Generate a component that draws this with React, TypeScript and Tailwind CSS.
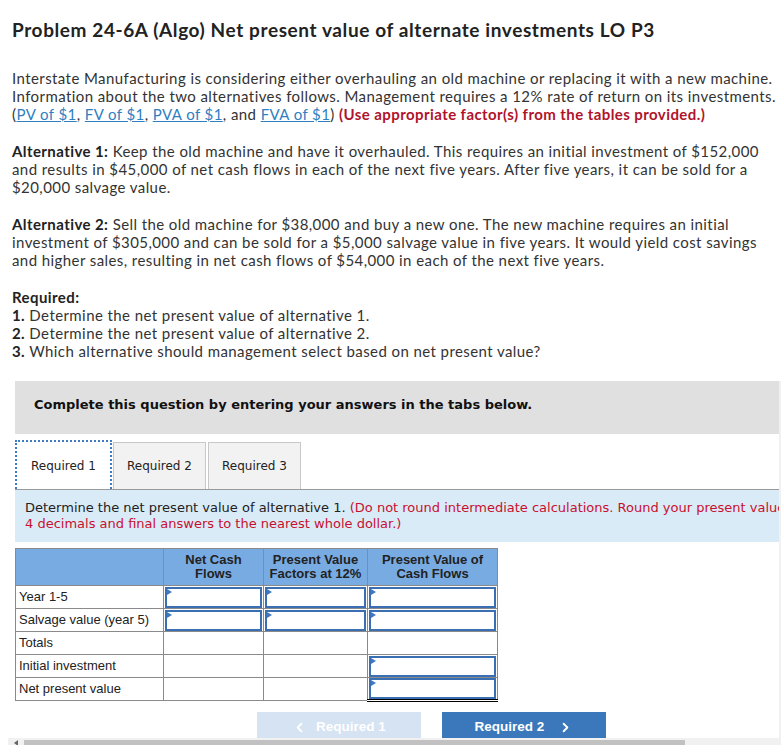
import React from "react";
import { ChevronLeft, ChevronRight } from "lucide-react";

const Tri = () => (
  <span className="absolute left-0 top-0 w-0 h-0 border-t-[3px] border-b-[3px] border-l-[5px] border-t-transparent border-b-transparent border-l-[#3d79c2]" />
);

const InputCell = ({ npv = false }: { npv?: boolean }) => (
  <td
    className={`border border-[#8a8a8a] p-0 h-[23px] ${
      npv ? "border-t-black border-b-[3px] border-b-black [border-bottom-style:double]" : ""
    }`}
  >
    <div className="relative h-[21px] mx-[1px] border-2 border-[#3a6fb3] bg-white">
      <Tri />
    </div>
  </td>
);

const EmptyCell = () => <td className="border border-[#8a8a8a] p-0 h-[23px]" />;

const Label = ({ children }: { children: React.ReactNode }) => (
  <td className="border border-[#8a8a8a] px-[3px] h-[23px] text-[13px] text-[#222] whitespace-nowrap">{children}</td>
);

export default function App() {
  const body = "font-['Lato','Liberation_Sans',sans-serif]";
  const verdana = "font-['DejaVu_Sans','Verdana',sans-serif]";
  const arial = "font-['Liberation_Sans','Arial',sans-serif]";
  const link = "text-[#2f7fc1] underline";
  const para = "text-[15px] leading-[18px] tracking-[0.42px] whitespace-nowrap";
  return (
    <div className="w-[781px] h-[745px] overflow-hidden bg-white relative">
      <div className={`pl-[12px] ${body} text-[#333]`}>
        <h1 className="pt-[19px] text-[19px] leading-[22px] tracking-[0.6px] font-bold text-[#222] whitespace-nowrap">
          Problem 24-6A (Algo) Net present value of alternate investments LO P3
        </h1>
        <p className={`mt-[28px] ${para}`}>
          Interstate Manufacturing is considering either overhauling an old machine or replacing it with a new machine.
          <br />
          Information about the two alternatives follows. Management requires a 12% rate of return on its investments.
          <br />(
          <span className={link}>PV of $1</span>, <span className={link}>FV of $1</span>,{" "}
          <span className={link}>PVA of $1</span>, and <span className={link}>FVA of $1</span>){" "}
          <span className="font-bold text-[#b0132a]">(Use appropriate factor(s) from the tables provided.)</span>
        </p>
        <p className={`mt-[19px] ${para}`}>
          <span className="font-bold text-[#222]">Alternative 1:</span> Keep the old machine and have it overhauled. This requires an initial investment of $152,000
          <br />
          and results in $45,000 of net cash flows in each of the next five years. After five years, it can be sold for a
          <br />
          $20,000 salvage value.
        </p>
        <p className={`mt-[19px] ${para}`}>
          <span className="font-bold text-[#222]">Alternative 2:</span> Sell the old machine for $38,000 and buy a new one. The new machine requires an initial
          <br />
          investment of $305,000 and can be sold for a $5,000 salvage value in five years. It would yield cost savings
          <br />
          and higher sales, resulting in net cash flows of $54,000 in each of the next five years.
        </p>
        <div className={`mt-[19px] ${para}`}>
          <div className="font-bold text-[#222]">Required:</div>
          <div><span className="font-bold text-[#222]">1.</span> Determine the net present value of alternative 1.</div>
          <div><span className="font-bold text-[#222]">2.</span> Determine the net present value of alternative 2.</div>
          <div><span className="font-bold text-[#222]">3.</span> Which alternative should management select based on net present value?</div>
        </div>
      </div>

      <div className="mt-[21px] ml-[8px] w-[773px] flex flex-col">
        <div className="flex">
          <div className="w-[771px] h-[357px] overflow-hidden pl-[7px]">
            <div className="w-[1000px]">
              <div className={`w-[764px] h-[53px] bg-[#e0e0e0] pl-[19px] pt-[14px] ${verdana} text-[13px] font-bold text-[#111] whitespace-nowrap`}>
                Complete this question by entering your answers in the tabs below.
              </div>
              <div className={`mt-[6px] flex items-end ${verdana} text-[12px] text-[#222]`}>
                <div className="w-[97px] h-[49px] bg-white border-2 border-dotted border-[#3d7cc0] border-b-0 flex items-center justify-center">
                  Required 1
                </div>
                <div className="ml-[1px] w-[93px] h-[47px] bg-[#f2f2f2] border border-[#c8c8c8] border-b-0 flex items-center justify-center">
                  Required 2
                </div>
                <div className="ml-[2px] w-[93px] h-[47px] bg-[#f2f2f2] border border-[#c8c8c8] border-b-0 flex items-center justify-center">
                  Required 3
                </div>
              </div>
              <div className={`w-[1000px] border-t border-[#9a9a9a] bg-[#daebf8] pl-[10px] pt-[10px] pb-[10px] ${verdana} text-[13px] leading-[16px] whitespace-nowrap`}>
                <span className="text-[#222]">Determine the net present value of alternative 1. </span>
                <span className="text-[#c8102e]">(Do not round intermediate calculations. Round your present value factor to</span>
                <br />
                <span className="text-[#c8102e]">4 decimals and final answers to the nearest whole dollar.)</span>
              </div>

              <table className={`mt-[6px] border-collapse ${arial}`}>
                <colgroup>
                  <col className="w-[148px]" />
                  <col className="w-[100px]" />
                  <col className="w-[104px]" />
                  <col className="w-[130px]" />
                </colgroup>
                <thead>
                  <tr className="bg-[#78abe2] h-[37px] text-[13px] font-bold text-[#222] leading-[14px]">
                    <th className="border border-[#8a8a8a]" />
                    <th className="border border-[#8a8a8a] font-bold">Net Cash<br />Flows</th>
                    <th className="border border-[#8a8a8a] font-bold">Present Value<br />Factors at 12%</th>
                    <th className="border border-[#8a8a8a] font-bold">Present Value of<br />Cash Flows</th>
                  </tr>
                </thead>
                <tbody>
                  <tr>
                    <Label>Year 1-5</Label>
                    <InputCell />
                    <InputCell />
                    <InputCell />
                  </tr>
                  <tr>
                    <Label>Salvage value (year 5)</Label>
                    <InputCell />
                    <InputCell />
                    <InputCell />
                  </tr>
                  <tr>
                    <Label>Totals</Label>
                    <EmptyCell />
                    <EmptyCell />
                    <EmptyCell />
                  </tr>
                  <tr>
                    <Label>Initial investment</Label>
                    <EmptyCell />
                    <EmptyCell />
                    <InputCell />
                  </tr>
                  <tr>
                    <Label>Net present value</Label>
                    <EmptyCell />
                    <EmptyCell />
                    <InputCell npv />
                  </tr>
                </tbody>
              </table>

              <div className={`mt-[10px] ml-[242px] flex gap-[21px] ${arial} text-[13.5px] font-bold text-white`}>
                <div className="w-[164px] h-[30px] bg-[#d5e3f2] flex items-center justify-center gap-[9px]">
                  <ChevronLeft size={15} strokeWidth={3} />
                  <span>Required 1</span>
                </div>
                <div className="w-[164px] h-[30px] bg-[#3a77bb] flex items-center justify-center gap-[14px]">
                  <span>Required 2</span>
                  <ChevronRight size={15} strokeWidth={3} />
                </div>
              </div>
            </div>
          </div>
          <div className="w-[2px] bg-[#f1f1f1]" />
        </div>
        <div className="h-[10px] bg-[#f1f1f1] flex items-start">
          <div className="w-[16px] h-full flex items-center justify-center">
            <span className="w-0 h-0 border-t-[3px] border-b-[3px] border-r-[4px] border-t-transparent border-b-transparent border-r-[#666]" />
          </div>
          <div className="mt-[2px] w-[661px] h-[8px] bg-[#c1c1c1]" />
        </div>
      </div>
    </div>
  );
}
